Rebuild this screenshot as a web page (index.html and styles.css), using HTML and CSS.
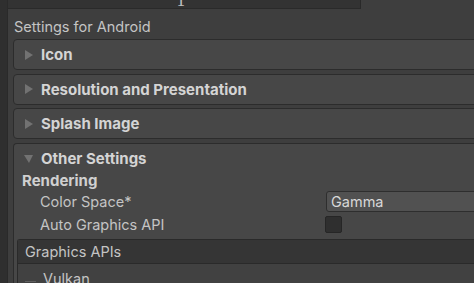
FILE: index.html
```html
<!DOCTYPE html>
<html lang="en">
<head>
  <meta charset="UTF-8">
  <title>Player Settings - Android</title>
  <link rel="stylesheet" href="styles.css">
</head>
<body>
  <div class="app">
    <aside class="gutter"></aside>
    <main class="inspector">
      <div class="topbar"><span class="topbar-glyph">1</span></div>
      <div class="title">Settings for Android</div>

      <div class="sections">
        <section class="foldout">
          <div class="foldout-head"><span class="arrow right"></span>Icon</div>
        </section>
        <section class="foldout">
          <div class="foldout-head"><span class="arrow right"></span>Resolution and Presentation</div>
        </section>
        <section class="foldout">
          <div class="foldout-head"><span class="arrow right"></span>Splash Image</div>
        </section>
        <section class="foldout open">
          <div class="foldout-head"><span class="arrow down"></span>Other Settings</div>
          <div class="foldout-body">
            <div class="group-label">Rendering</div>
            <div class="field">
              <span class="field-label">Color Space*</span>
              <div class="dropdown">Gamma</div>
            </div>
            <div class="field">
              <span class="field-label">Auto Graphics API</span>
              <span class="checkbox"></span>
            </div>
            <div class="list">
              <div class="list-head">Graphics APIs</div>
              <div class="list-item"><span class="handle"></span>Vulkan</div>
            </div>
          </div>
        </section>
      </div>
    </main>
  </div>
</body>
</html>
```

FILE: styles.css
```css
/* Base */
body {
  margin: 0;
  background-color: #3e3e3e;
  font-family: Inter, "Noto Sans", sans-serif;
  font-size: 14.5px;
  color: #c4c4c4;
  overflow: hidden;
}
.app {
  display: flex;
  height: 283px;
}
.gutter {
  width: 7px;
  background-color: #2f2f2f;
  border-right: 1px solid #2a2a2a;
  flex-shrink: 0;
}
.inspector {
  flex: 1;
  min-width: 0;
  height: 283px;
  overflow: hidden;
}

/* Top toolbar remnant */
.topbar {
  width: 352px;
  height: 8px;
  background-color: #333;
  border-bottom: 1px solid #2a2a2a;
  border-right: 1px solid #292929;
  overflow: hidden;
  position: relative;
}
.topbar-glyph {
  position: absolute;
  left: 168px;
  top: -9px;
  font-family: "DejaVu Serif", serif;
  font-size: 16px;
  color: #bdbdbd;
}

.title {
  height: 30px;
  line-height: 36px;
  padding-left: 6px;
  white-space: nowrap;
}

/* Foldout boxes */
.sections {
  display: flex;
  flex-direction: column;
  gap: 3.6px;
  padding-left: 5px;
  margin-right: -12px;
}
.foldout {
  background-color: #474747;
  border: 1px solid #2c2c2c;
  border-radius: 4px;
}
.foldout-head {
  display: flex;
  align-items: center;
  height: 29px;
  padding-left: 11px;
  font-size: 15px;
  font-weight: 700;
  color: #d4d4d4;
  white-space: nowrap;
}
.arrow {
  width: 0;
  height: 0;
  margin-right: 8px;
}
.arrow.right {
  border-top: 5px solid transparent;
  border-bottom: 5px solid transparent;
  border-left: 8px solid #727272;
}
.arrow.down {
  border-left: 5px solid transparent;
  border-right: 4px solid transparent;
  border-top: 8px solid #727272;
  margin-left: -1px;
  margin-top: 1px;
}
.foldout.open {
  border-bottom: none;
  border-radius: 4px 4px 0 0;
  height: 200px;
}
.foldout-body {
  padding-left: 8px;
}
.group-label {
  height: 18px;
  line-height: 16px;
  font-size: 15px;
  font-weight: 700;
  color: #d0d0d0;
}

/* Property fields */
.field {
  display: flex;
  align-items: center;
  height: 22px;
  margin-bottom: 1px;
}
.field-label {
  width: 286px;
  padding-left: 18px;
  flex-shrink: 0;
  white-space: nowrap;
}
.dropdown {
  flex: 1;
  height: 19px;
  line-height: 19px;
  padding-left: 4px;
  background-color: #515151;
  border: 1px solid #2e2e2e;
  border-radius: 3px;
  color: #d8d8d8;
}
.checkbox {
  width: 15px;
  height: 15px;
  background-color: #2f2f2f;
  border: 1px solid #262626;
  border-radius: 2px;
  margin-left: -1px;
}

/* Reorderable list */
.list {
  margin-top: 3px;
  margin-left: -5px;
  border: 1px solid #2a2a2a;
  border-right: none;
  border-radius: 3px 0 0 0;
}
.list-head {
  height: 23px;
  line-height: 24px;
  padding-left: 7px;
  background-color: #353535;
  border-bottom: 1px solid #2a2a2a;
}
.list-item {
  display: flex;
  align-items: center;
  height: 30px;
  padding-left: 7px;
  background-color: #414141;
}
.handle {
  width: 11px;
  height: 3px;
  border-top: 1px solid #5e5e5e;
  border-bottom: 1px solid #5e5e5e;
  margin-right: 7px;
  margin-top: 10px;
}
```
